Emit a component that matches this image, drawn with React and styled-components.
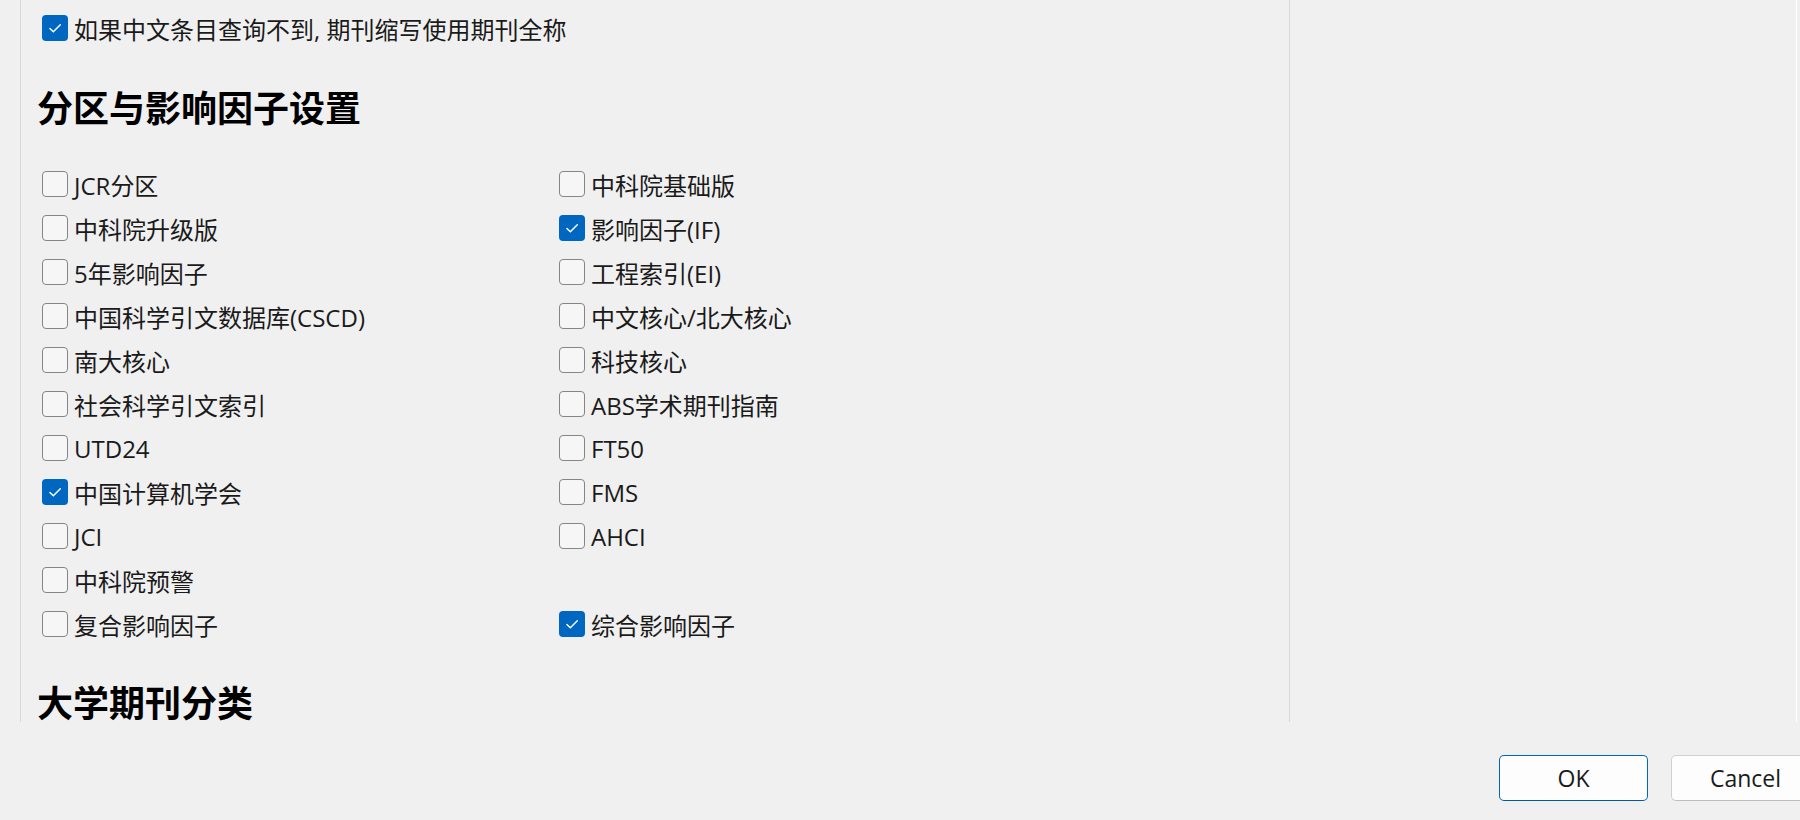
import React from "react"
import styled, { createGlobalStyle } from "styled-components"

const GlobalStyle = createGlobalStyle`
  html, body {
    margin: 0;
    padding: 0;
    background: #f0f0f0;
    overflow: hidden;
  }
  body {
    font-family: "Open Sans", "Noto Sans CJK SC", sans-serif;
    color: #1a1a1a;
  }
`

const Window = styled.div`
  width: 1800px;
  height: 820px;
  display: flex;
  flex-direction: column;
  background: #f0f0f0;
`

const Main = styled.div`
  height: 722px;
  display: flex;
  padding-left: 20px;
`

const SettingsPane = styled.div`
  width: 1268px;
  border-left: 1px solid #d9d9d9;
  border-right: 1px solid #d9d9d9;
  overflow: hidden;
  padding-top: 6px;
`

const SidePane = styled.div`
  width: 506px;
  border-right: 1px solid #ffffff;
`

const Row = styled.label`
  display: flex;
  align-items: center;
  gap: 6px;
  height: 44px;
  padding-left: 21px;
  font-size: 24px;
  white-space: nowrap;
`

const Heading = styled.h2`
  margin: ${p => p.$top}px 0 0;
  padding-left: 16px;
  font-family: "Noto Sans CJK SC", sans-serif;
  font-size: 36px;
  font-weight: 700;
  line-height: 43px;
  color: #000;
`

const Grid = styled.div`
  display: grid;
  grid-template-columns: 517px 517px;
  margin-top: 34px;
`

const Box = styled.span`
  flex: none;
  box-sizing: border-box;
  width: 26px;
  height: 26px;
  border-radius: 4px;
  border: ${p => (p.$checked ? "none" : "1.5px solid #858585")};
  background: ${p => (p.$checked ? "#0067c0" : "#f6f6f6")};
  display: flex;
  align-items: center;
  justify-content: center;
`

const Footer = styled.div`
  flex: 1;
  display: flex;
  justify-content: flex-end;
  align-items: flex-start;
  gap: 23px;
  padding-top: 33px;
  margin-right: -20px;
`

const Button = styled.button`
  box-sizing: border-box;
  width: 149px;
  height: 46px;
  border-radius: 5px;
  background: #fdfdfd;
  border: 1px solid ${p => (p.$primary ? "#0067c0" : "#d0d0d0")};
  border-bottom-color: ${p => (p.$primary ? "#0058a8" : "#bdbdbd")};
  font-family: "Open Sans", sans-serif;
  font-size: 23px;
  color: #1a1a1a;
  padding: 0;
`

function Check({ checked, label }) {
  return (
    <Row>
      <Box $checked={checked}>
        {checked && (
          <svg width="26" height="26" viewBox="0 0 25 25">
            <path d="M7.6 12.9 L10.9 16.1 L17.6 9.3" fill="none" stroke="#fff" strokeWidth="1.4" strokeLinecap="round" strokeLinejoin="round" />
          </svg>
        )}
      </Box>
      <span>{label}</span>
    </Row>
  )
}

const metrics = [
  ["JCR分区", false], ["中科院基础版", false],
  ["中科院升级版", false], ["影响因子(IF)", true],
  ["5年影响因子", false], ["工程索引(EI)", false],
  ["中国科学引文数据库(CSCD)", false], ["中文核心/北大核心", false],
  ["南大核心", false], ["科技核心", false],
  ["社会科学引文索引", false], ["ABS学术期刊指南", false],
  ["UTD24", false], ["FT50", false],
  ["中国计算机学会", true], ["FMS", false],
  ["JCI", false], ["AHCI", false],
  ["中科院预警", false], null,
  ["复合影响因子", false], ["综合影响因子", true],
]

export default function App() {
  return (
    <Window>
      <GlobalStyle />
      <Main>
        <SettingsPane>
          <Check checked label="如果中文条目查询不到, 期刊缩写使用期刊全称" />
          <Heading $top={35}>分区与影响因子设置</Heading>
          <Grid>
            {metrics.map((m, i) =>
              m ? <Check key={i} checked={m[1]} label={m[0]} /> : <div key={i} />
            )}
          </Grid>
          <Heading $top={34}>大学期刊分类</Heading>
        </SettingsPane>
        <SidePane />
      </Main>
      <Footer>
        <Button $primary>OK</Button>
        <Button>Cancel</Button>
      </Footer>
    </Window>
  )
}
